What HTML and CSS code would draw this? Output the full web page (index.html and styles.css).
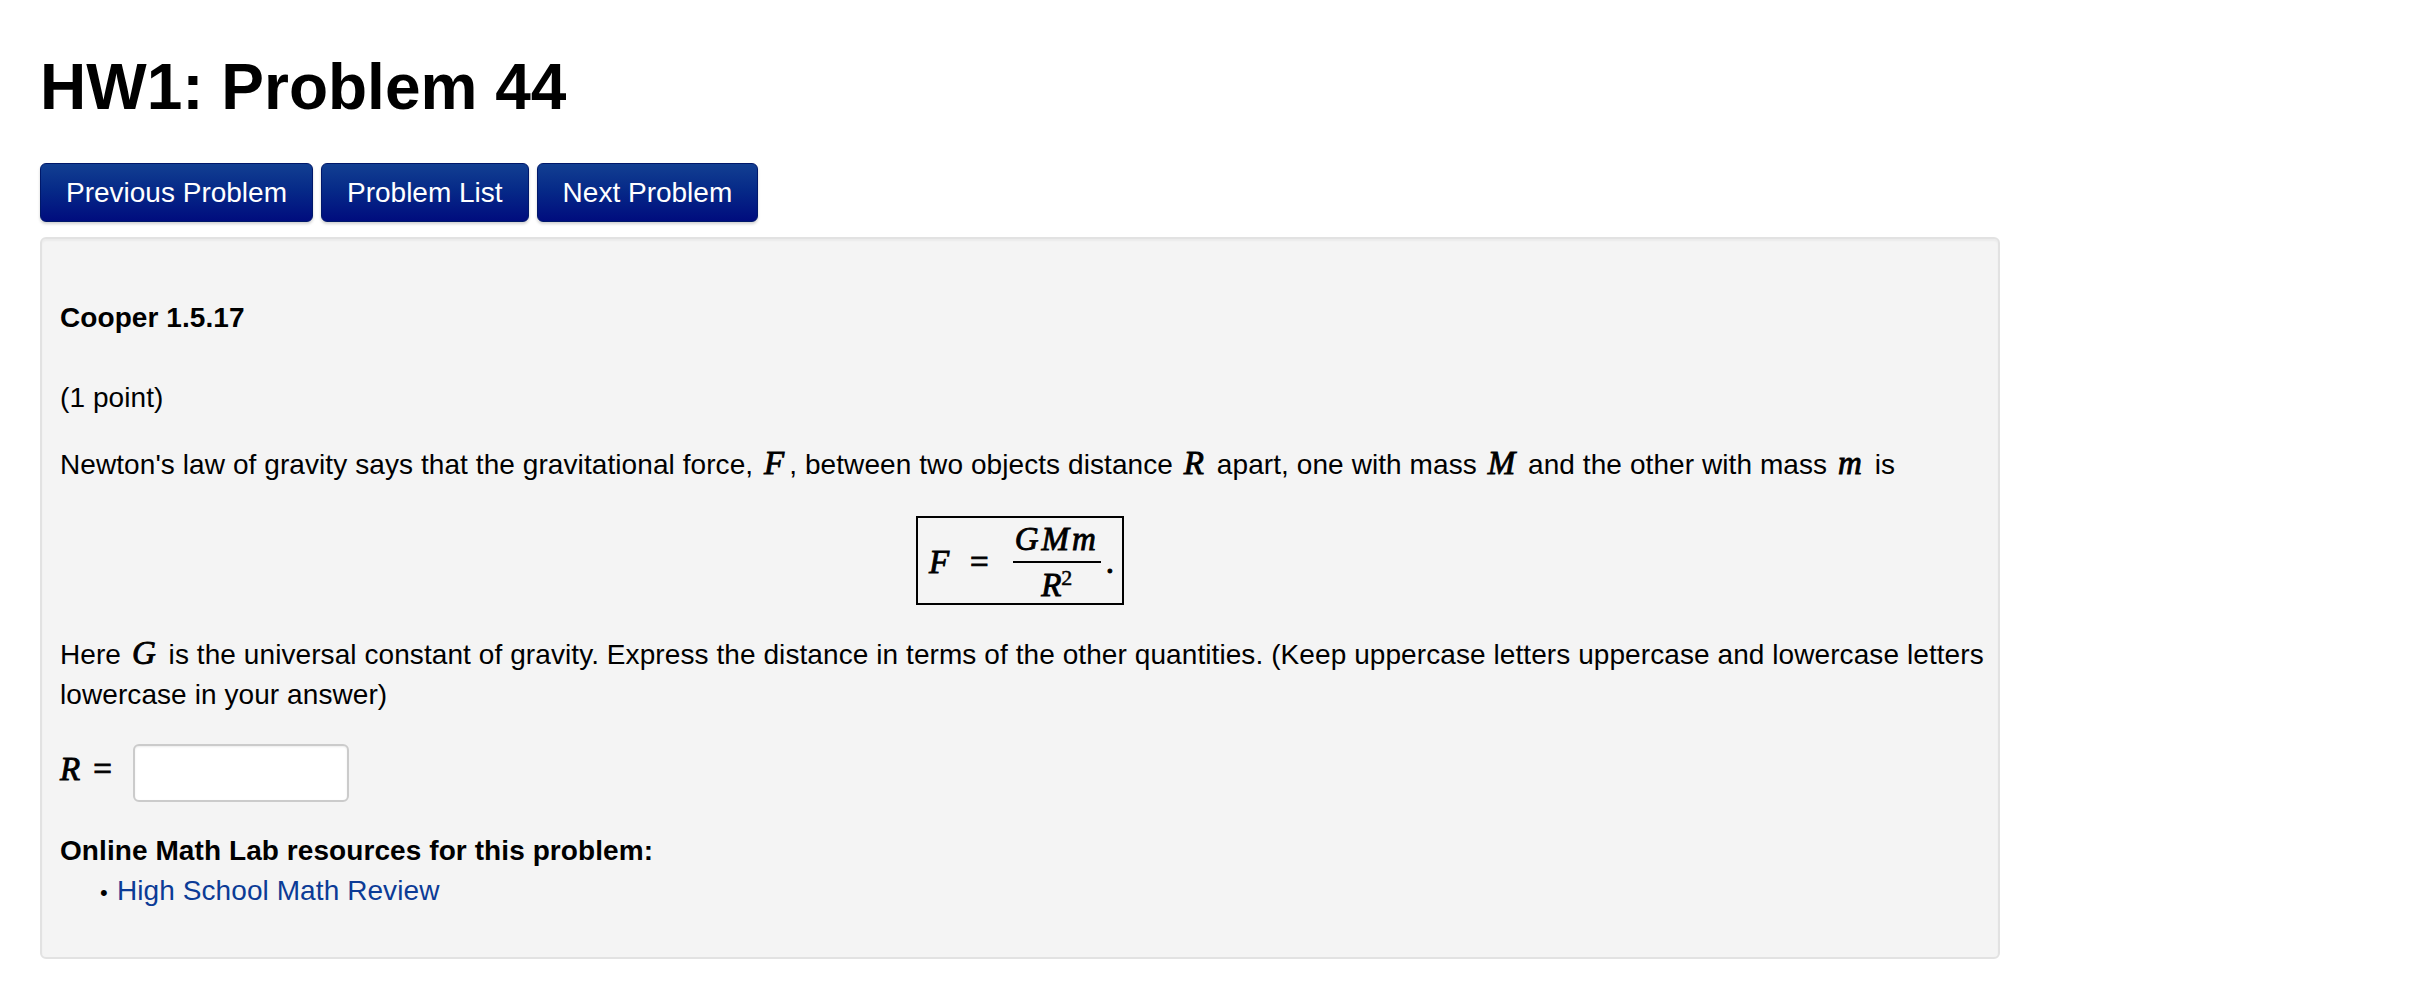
FILE: index.html
```html
<!DOCTYPE html>
<html lang="en">
<head>
  <meta charset="UTF-8" />
  <title>HW1: Problem 44</title>
  <link rel="stylesheet" href="styles.css">
</head>
<body>
  <div class="container">
    <h1 class="page-title">HW1: Problem 44</h1>

    <div class="nav-buttons">
      <a href="#" class="btn">Previous Problem</a>
      <a href="#" class="btn">Problem List</a>
      <a href="#" class="btn">Next Problem</a>
    </div>

    <div class="well">
      <p class="source">Cooper 1.5.17</p>
      <p class="points">(1 point)</p>

      <p class="text">Newton's law of gravity says that the gravitational force, <span class="mi">F</span>, between two objects distance <span class="mi">R</span> apart, one with mass <span class="mi">M</span> and the other with mass <span class="mi">m</span> is</p>

      <div class="display-math">
        <div class="boxed">
          <span class="mi lead">F</span>
          <span class="mo">=</span>
          <span class="frac">
            <span class="num">GMm</span>
            <span class="bar"></span>
            <span class="den">R<span class="sup">2</span></span>
          </span>
          <span class="dot">.</span>
        </div>
      </div>

      <p class="text here">Here <span class="mi">G</span> is the universal constant of gravity. Express the distance in terms of the other quantities. (Keep uppercase letters uppercase and lowercase letters<br>lowercase in your answer)</p>

      <div class="answer-row">
        <span class="answer-label"><span class="mi">R</span><span class="eq">=</span></span>
        <input type="text" class="answer" />
      </div>

      <p class="resources">Online Math Lab resources for this problem:</p>
      <ul class="resource-list">
        <li><a href="#">High School Math Review</a></li>
      </ul>
    </div>
  </div>
</body>
</html>
```

FILE: styles.css
```css
body {
  font-family: "Liberation Sans", Arial, Helvetica, sans-serif;
  background: #fff;
  color: #000;
  margin: 0;
  padding: 0;
}
.container {
  width: 1960px;
  padding-left: 40px;
}
.page-title {
  font-size: 64px;
  font-weight: bold;
  line-height: 70px;
  margin: 52px 0 0;
}
.nav-buttons {
  display: flex;
  gap: 8px;
  margin-top: 41px;
}
.btn {
  display: inline-flex;
  align-items: center;
  height: 59px;
  box-sizing: border-box;
  padding: 0 25px;
  font-size: 28px;
  color: #fff;
  text-decoration: none;
  background: linear-gradient(to bottom, #123f92 0%, #062a88 45%, #000c7e 100%);
  border: 1px solid #00186a;
  border-radius: 6px;
  box-shadow: 0 2px 3px rgba(0, 0, 0, 0.18);
}
.well {
  margin-top: 15px;
  background: #f4f4f4;
  border: 2px solid #e2e2e2;
  border-radius: 6px;
  box-shadow: inset 0 2px 2px rgba(0, 0, 0, 0.04);
  padding: 59px 18px 44px;
  font-size: 28px;
  line-height: 40px;
  letter-spacing: 0.08px;
}
.well p {
  margin: 0;
}
.source {
  font-weight: bold;
  margin-bottom: 40px !important;
}
.points {
  margin-bottom: 27px !important;
}
.mi, .mo, .dot, .num, .den, .eq {
  font-family: "Liberation Serif", "Times New Roman", serif;
  font-size: 33px;
  line-height: 31px;
  letter-spacing: 0;
  -webkit-text-stroke: 0.9px #000;
}
.mi {
  font-style: italic;
  margin: 0 5px 0 3px;
}
.display-math {
  display: flex;
  justify-content: center;
  margin: 31px 0 30px;
}
.boxed {
  display: inline-flex;
  align-items: center;
  border: 2px solid #000;
  padding: 5px 8px 2px 11px;
}
.boxed .lead {
  margin: 0;
  line-height: 32px;
}
.boxed .mo {
  margin: 0 24px 0 21px;
  line-height: 32px;
}
.frac {
  display: inline-flex;
  flex-direction: column;
  align-items: center;
}
.num, .den {
  font-style: italic;
  line-height: 32px;
  white-space: nowrap;
}
.num {
  padding: 0 2px 6px;
  letter-spacing: 3px;
}
.den {
  padding-top: 6px;
}
.sup {
  font-size: 22px;
  font-style: normal;
  line-height: 0;
  vertical-align: 11px;
  -webkit-text-stroke: 0.5px #000;
}
.bar {
  display: block;
  align-self: stretch;
  height: 2px;
  background: #000;
}
.dot {
  margin-left: 5px;
  line-height: 32px;
}
.here {
  white-space: nowrap;
}
.answer-row {
  display: flex;
  align-items: center;
  gap: 21px;
  margin: 29px 0;
}
.answer-label {
  display: inline-flex;
  align-items: baseline;
  gap: 13px;
  margin-bottom: 7px;
}
.answer-label .mi {
  margin: 0;
}
.answer {
  width: 216px;
  height: 58px;
  box-sizing: border-box;
  border: 2px solid #cbcbcb;
  border-radius: 6px;
  background: #fff;
  box-shadow: inset 0 1px 2px rgba(0, 0, 0, 0.08);
}
.resources {
  font-weight: bold;
}
.resource-list {
  margin: 0;
  padding-left: 57px;
  list-style: none;
}
.resource-list li::before {
  content: "\2022";
  display: inline-block;
  width: 17px;
  margin-left: -17px;
  font-size: 22px;
}
.resource-list a {
  color: #0b3b96;
  text-decoration: none;
}
```
